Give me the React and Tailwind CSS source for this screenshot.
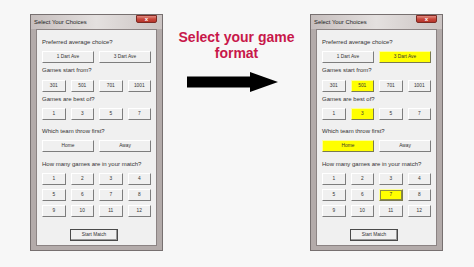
const sans = { fontFamily: '"Liberation Sans", Arial, sans-serif' };

const rows = [
  { label: "Preferred average choice?", cols: 2, items: ["1 Dart Ave", "3 Dart Ave"], mt: "mt-[9px]" },
  { label: "Games start from?", cols: 4, items: ["301", "501", "701", "1001"], mt: "mt-[4px]" },
  { label: "Games are best of?", cols: 4, items: ["1", "3", "5", "7"], mt: "mt-[4px]" },
  { label: "Which team throw first?", cols: 2, items: ["Home", "Away"], mt: "mt-[8px]" },
];

const games = ["1", "2", "3", "4", "5", "6", "7", "8", "9", "10", "11", "12"];

function Btn({ text, on, focus }) {
  const base = "h-[12px] flex items-center justify-center text-[4.8px] text-[#333] border";
  const face = on
    ? "bg-[#ffff00] border-t-[#fdfd9a] border-l-[#fdfd9a] border-r-[#7a7a50] border-b-[#7a7a50]"
    : "bg-[#f0f0f0] border-t-white border-l-white border-r-[#7d7d7d] border-b-[#7d7d7d]";
  const ring = focus ? "border-[#5a5a30] shadow-[inset_0_0_0_1px_#8c8c40]" : "";
  return <div className={`${base} ${face} ${ring}`}>{text}</div>;
}

function Dialog({ picks = {} }) {
  return (
    <div className="w-[133px] h-[237px] flex flex-col border border-[#777070] bg-[#b3abaa]" style={sans}>
      <div className="h-[14px] flex items-start justify-between bg-linear-to-r from-[#c6bebd] via-[#e4e0df] to-[#cbc3c2]">
        <span className="pl-[3px] pt-[4px] text-[5.9px] leading-[7px] text-[#222]">Select Your Choices</span>
        <div className="mt-[0px] mr-[5px] w-[21px] h-[8px] rounded-b-[2px] bg-linear-to-b from-[#e08a80] via-[#c9473c] to-[#b5332a] border border-[#7c2a24] flex items-center justify-center text-white text-[6px] leading-[6px] font-bold">
          x
        </div>
      </div>
      <div className="mx-[5px] mb-[4px] flex-1 bg-[#f0f0f0] border border-[#8b8383] px-[5px]">
        {rows.map((r, i) => (
          <div key={r.label}>
            <div className={`${r.mt} h-[7px] leading-[7px] text-[6px] text-[#333]`}>{r.label}</div>
            <div
              className={`${i === 1 ? "mt-[6px]" : "mt-[5px]"} grid gap-x-[5px] ${r.cols === 2 ? "grid-cols-2" : "grid-cols-4"}`}
            >
              {r.items.map((t) => (
                <Btn key={t} text={t} on={picks[i] === t} />
              ))}
            </div>
          </div>
        ))}
        <div className="mt-[9px] h-[7px] leading-[7px] text-[6px] text-[#333]">How many games are in your match?</div>
        <div className="mt-[5px] grid grid-cols-4 gap-x-[5px] gap-y-[4px]">
          {games.map((t) => (
            <Btn key={t} text={t} on={picks.games === t} focus={picks.games === t} />
          ))}
        </div>
        <div className="mt-[12px] ml-[28px] w-[48px] h-[12px] flex items-center justify-center bg-[#f0f0f0] border border-[#4a4a4a] shadow-[inset_-1px_-1px_0_#9a9a9a] text-[4.8px] text-[#333]">
          Start Match
        </div>
      </div>
    </div>
  );
}

export default function App() {
  return (
    <div className="w-[474px] h-[267px] bg-[#f7f7f7] flex items-start pt-[14px] pl-[30px] overflow-hidden">
      <Dialog />
      <div className="w-[147px] flex flex-col items-center" style={sans}>
        <div className="mt-[15px] text-[14px] leading-[16px] font-bold text-[#c8174a] text-center">
          Select your game
          <br />
          format
        </div>
        <svg className="mt-[11px] mr-[8px]" width="91" height="20" viewBox="0 0 91 20">
          <polygon points="0,4.5 63,4.5 63,0 91,10 63,20 63,15.5 0,15.5" fill="#000" />
        </svg>
      </div>
      <Dialog picks={{ 0: "3 Dart Ave", 1: "501", 2: "3", 3: "Home", games: "7" }} />
    </div>
  );
}
